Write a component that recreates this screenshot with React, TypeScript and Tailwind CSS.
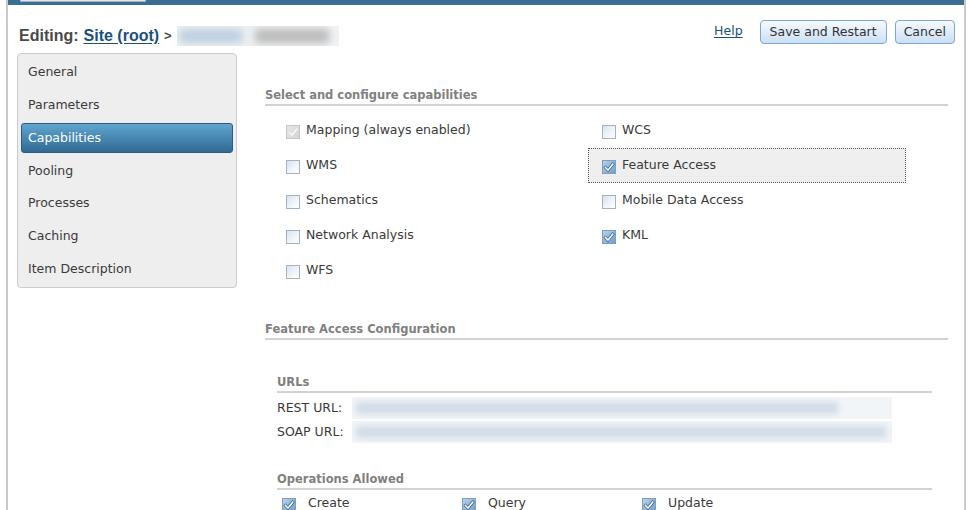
import React from "react";

type BoxState = "off" | "on" | "locked";

function CheckBox({ state }: { state: BoxState }) {
  if (state === "off") {
    return (
      <span className="block w-[14px] h-[14px] shrink-0 border border-[#a3b3c3] bg-linear-to-br from-[#d6e2ee] via-[#eef3f8] to-white" />
    );
  }
  const locked = state === "locked";
  return (
    <svg width="14" height="14" viewBox="0 0 14 14" className="shrink-0 block">
      <defs>
        <linearGradient id={locked ? "gl" : "gc"} x1="0" y1="0" x2="1" y2="1">
          <stop offset="0" stopColor={locked ? "#e6e6e6" : "#b9d3ec"} />
          <stop offset="1" stopColor={locked ? "#d4d4d4" : "#6d9dcc"} />
        </linearGradient>
      </defs>
      <rect x="0.5" y="0.5" width="13" height="13" fill={`url(#${locked ? "gl" : "gc"})`} stroke={locked ? "#c6c6c6" : "#7d9fbf"} />
      {!locked && <path d="M3.5 7.5 L6 10 L10.8 4.2" fill="none" stroke="#2f5f8c" strokeWidth="3" strokeLinecap="square" />}
      <path d="M3.5 7.5 L6 10 L10.8 4.2" fill="none" stroke={locked ? "#f7f7f7" : "#ffffff"} strokeWidth="1.6" strokeLinecap="square" />
    </svg>
  );
}

function Cap({ label, state, focus }: { label: string; state: BoxState; focus?: boolean }) {
  return (
    <div
      className={
        "h-[35px] flex items-center gap-[6px] " +
        (focus ? "pl-[13px] bg-[#efefef] border border-dotted border-[#555]" : "pl-[14px]")
      }
    >
      <span className="mt-[3px]">
        <CheckBox state={state} />
      </span>
      <span>{label}</span>
    </div>
  );
}

function Heading({ children, className = "" }: { children: React.ReactNode; className?: string }) {
  return (
    <div className={"text-[11.5px] leading-[14px] font-bold text-[#808080] pb-[2px] border-b-2 border-[#d2d2d2] " + className}>
      {children}
    </div>
  );
}

export default function App() {
  const nav = ["General", "Parameters", "Capabilities", "Pooling", "Processes", "Caching", "Item Description"];

  return (
    <div className="w-[972px] h-[510px] overflow-hidden bg-white font-['DejaVu_Sans',sans-serif] text-[12.5px] text-[#3a3a3a]">
      <div className="ml-[6px] w-[960px] h-full border-x-2 border-[#cacaca] flex flex-col">
        {/* top bar */}
        <div className="h-[5px] bg-[#3b6d92] shrink-0">
          <div className="ml-[12px] w-[126px] h-[2px] bg-[#e4e4e4] border-x border-b border-[#9fb4c6]" />
        </div>

        <div className="px-[9px]">
          {/* header */}
          <div className="mt-[15px] h-[24px] flex items-center justify-between">
            <div className="mt-[8px] flex items-center ml-[2px] font-['Liberation_Sans',sans-serif] text-[16px] font-bold text-[#4a4a4a]">
              <span>Editing:</span>
              <span className="ml-[5px] text-[#1b4f7c] underline underline-offset-2">Site (root)</span>
              <span className="ml-[5px] text-[13px]">&gt;</span>
              <div className="ml-[5px] w-[162px] h-[20px] bg-[#f1f3f5] flex items-center overflow-hidden">
                <div className="ml-[2px] w-[64px] h-[14px] bg-[#bccfe0] blur-[4px]" />
                <div className="ml-[12px] w-[74px] h-[14px] bg-[#b9b9b9] blur-[4px]" />
              </div>
            </div>
            <div className="flex items-center">
              <span className="text-[#1b4f7c] underline underline-offset-2 -mt-[1px]">Help</span>
              <button className="ml-[17px] h-[24px] px-[9px] border border-[#7fa7cf] rounded-[4px] bg-linear-to-b from-[#f6faff] to-[#cbdff5] text-[#333]">
                Save and Restart
              </button>
              <button className="ml-[8px] h-[24px] px-[8px] border border-[#7fa7cf] rounded-[4px] bg-linear-to-b from-[#f6faff] to-[#cbdff5] text-[#333]">
                Cancel
              </button>
            </div>
          </div>

          {/* body */}
          <div className="mt-[9px] flex items-start">
            {/* sidebar */}
            <div className="w-[220px] h-[235px] bg-[#eeeeee] border border-[#cccccc] rounded-[4px] p-[3px] pt-[4px] flex flex-col gap-[3px]">
              {nav.map((n) =>
                n === "Capabilities" ? (
                  <div
                    key={n}
                    className="h-[30px] flex items-center px-[6px] rounded-[3px] border border-[#2d5b80] bg-linear-to-b from-[#61a6d0] to-[#2f6a93] text-white"
                  >
                    {n}
                  </div>
                ) : (
                  <div key={n} className="h-[30px] flex items-center px-[7px]">
                    {n}
                  </div>
                )
              )}
            </div>

            {/* main */}
            <div className="ml-[28px] w-[683px]">
              <Heading className="mt-[35px]">Select and configure capabilities</Heading>

              <div className="mt-[7px] pl-[7px] grid grid-cols-[316px_318px]">
                <Cap label="Mapping (always enabled)" state="locked" />
                <Cap label="WCS" state="off" />
                <Cap label="WMS" state="off" />
                <Cap label="Feature Access" state="on" focus />
                <Cap label="Schematics" state="off" />
                <Cap label="Mobile Data Access" state="off" />
                <Cap label="Network Analysis" state="off" />
                <Cap label="KML" state="on" />
                <Cap label="WFS" state="off" />
              </div>

              <Heading className="mt-[34px]">Feature Access Configuration</Heading>

              <div className="ml-[12px] mr-[16px]">
                <Heading className="mt-[35px]">URLs</Heading>
                <div className="mt-[3px] flex flex-col">
                  <div className="h-[24px] flex items-center">
                    <span className="w-[75px]">REST URL:</span>
                    <div className="h-[22px] w-[540px] bg-[#f2f5f8] flex items-center">
                      <div className="ml-[4px] w-[482px] h-[12px] bg-[#d0dbe6] blur-[3px]" />
                    </div>
                  </div>
                  <div className="h-[24px] flex items-center">
                    <span className="w-[75px]">SOAP URL:</span>
                    <div className="h-[22px] w-[540px] bg-[#f2f5f8] flex items-center">
                      <div className="ml-[4px] w-[530px] h-[12px] bg-[#d0dbe6] blur-[3px]" />
                    </div>
                  </div>
                </div>

                <Heading className="mt-[28px]">Operations Allowed</Heading>
                <div className="pl-[5px] grid grid-cols-[180px_180px_180px]">
                  {["Create", "Query", "Update"].map((o) => (
                    <div key={o} className="h-[26px] flex items-center gap-[12px]">
                      <span className="mt-[3px]">
                        <CheckBox state="on" />
                      </span>
                      <span>{o}</span>
                    </div>
                  ))}
                </div>
              </div>
            </div>
          </div>
        </div>
      </div>
    </div>
  );
}
